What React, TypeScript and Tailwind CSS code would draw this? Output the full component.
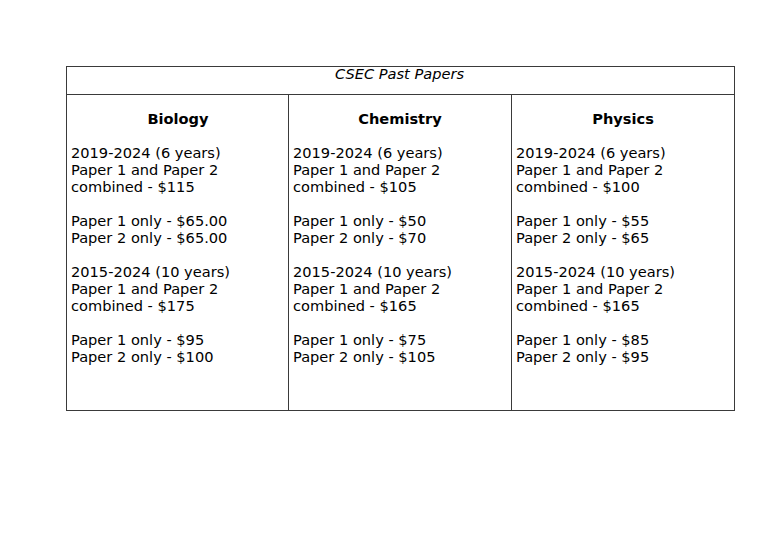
const subjects = [
  {
    name: 'Biology',
    groups: [
      ['2019-2024 (6 years)', 'Paper 1 and Paper 2', 'combined - $115'],
      ['Paper 1 only - $65.00', 'Paper 2 only - $65.00'],
      ['2015-2024 (10 years)', 'Paper 1 and Paper 2', 'combined - $175'],
      ['Paper 1 only - $95', 'Paper 2 only - $100'],
    ],
  },
  {
    name: 'Chemistry',
    groups: [
      ['2019-2024 (6 years)', 'Paper 1 and Paper 2', 'combined - $105'],
      ['Paper 1 only - $50', 'Paper 2 only - $70'],
      ['2015-2024 (10 years)', 'Paper 1 and Paper 2', 'combined - $165'],
      ['Paper 1 only - $75', 'Paper 2 only - $105'],
    ],
  },
  {
    name: 'Physics',
    groups: [
      ['2019-2024 (6 years)', 'Paper 1 and Paper 2', 'combined - $100'],
      ['Paper 1 only - $55', 'Paper 2 only - $65'],
      ['2015-2024 (10 years)', 'Paper 1 and Paper 2', 'combined - $165'],
      ['Paper 1 only - $85', 'Paper 2 only - $95'],
    ],
  },
]

export default function App() {
  return (
    <div className="min-h-screen bg-white pt-[66px] pl-[66px] font-['DejaVu_Sans',sans-serif] text-[14.6px] leading-[17px] text-black">
      <div className="w-[669px] border border-[#3a3a3a]">
        {/* title row */}
        <div className="h-[28px] border-b border-[#3a3a3a] pr-[2px] text-center italic leading-[14px]">
          CSEC Past Papers
        </div>
        <div className="grid grid-cols-[221px_223px_223px]">
          {subjects.map((s, i) => (
            <div
              key={s.name}
              className={`h-[315px] pt-[15px] ${i > 0 ? 'border-l border-[#3a3a3a] pl-[4px] pr-[4px]' : 'pl-[4px] pr-[3px]'}`}
            >
              <div className="mb-[17px] text-center font-bold">{s.name}</div>
              <div className="flex flex-col gap-[17px]">
                {s.groups.map((g, j) => (
                  <div key={j}>
                    {g.map((line) => (
                      <div key={line}>{line}</div>
                    ))}
                  </div>
                ))}
              </div>
            </div>
          ))}
        </div>
      </div>
    </div>
  )
}
